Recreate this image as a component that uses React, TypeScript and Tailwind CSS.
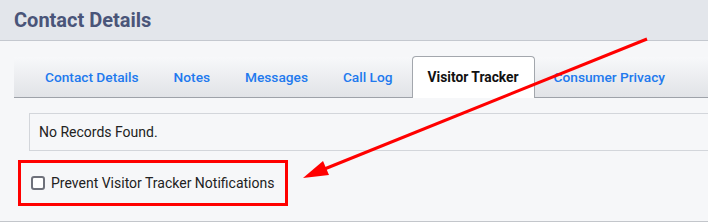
import React from "react";

const tabs = ["Contact Details", "Notes", "Messages", "Call Log", "Visitor Tracker", "Consumer Privacy"];

export default function App() {
  return (
    <div className="relative w-[708px] h-[222px] overflow-hidden bg-[#f6f7f9] border-b border-[#c3c6cb] font-['Roboto','Liberation_Sans',sans-serif]">
      <div className="h-[41px] flex items-center px-[14px] bg-[#e3e6eb] border-b border-[#c4c8cf]">
        <h1 className="text-[20px] font-bold text-[#4a5579] leading-none">Contact Details</h1>
      </div>
      <div className="pl-[14px] pt-[16px]">
        <div className="h-[41px] flex items-end pl-[15px] gap-[3px] bg-gradient-to-b from-[#f7f8fa] to-[#e1e3e7] border-b border-[#9ea2a9]">
          {tabs.map((t) =>
            t === "Visitor Tracker" ? (
              <div
                key={t}
                className="h-[42px] -mb-px px-[15px] flex items-center bg-white border border-b-0 border-[#a3a7ad] rounded-t-[4px] text-[13.8px] font-bold text-[#111111]"
              >
                {t}
              </div>
            ) : (
              <div key={t} className="h-[40px] px-4 flex items-center text-[13.7px] font-medium text-[#2179ee]">
                {t}
              </div>
            )
          )}
        </div>
      </div>
      <div className="pl-[29px] pt-[15px]">
        <div className="h-[38px] flex items-center pl-[9px] border-l border-y border-[#d3d6db] text-[14px] text-[#222222]">
          No Records Found.
        </div>
      </div>
      <div className="pl-[18px] pt-[9px]">
        <div className="w-[270px] h-[46px] flex items-center gap-[6px] pl-[10px] border-[3px] border-[#ff0000]">
          <span className="w-[14px] h-[14px] rounded-[3px] border-2 border-[#6e717b] bg-white" />
          <span className="text-[14px] text-[#222222]">Prevent Visitor Tracker Notifications</span>
        </div>
      </div>
      <svg className="absolute inset-0 pointer-events-none" width="708" height="222" viewBox="0 0 708 222">
        <line x1="647" y1="39" x2="322" y2="170" stroke="#ff0000" strokeWidth="3" />
        <polygon points="303,178 329,175 323,161" fill="#ff0000" />
      </svg>
    </div>
  );
}
